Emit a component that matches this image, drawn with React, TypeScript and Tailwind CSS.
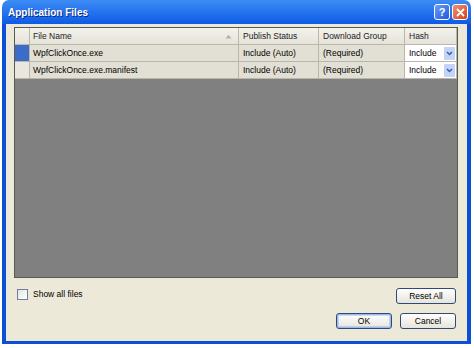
import React from 'react';

const rows = [
  { name: 'WpfClickOnce.exe', status: 'Include (Auto)', group: '(Required)', hash: 'Include', selected: true },
  { name: 'WpfClickOnce.exe.manifest', status: 'Include (Auto)', group: '(Required)', hash: 'Include', selected: false },
];

const cell = 'h-full flex items-center border-r border-b border-[#b9b7ab] px-[4px] whitespace-nowrap overflow-hidden';

const XpButton = ({ label, focused, className }: { label: string; focused?: boolean; className?: string }) => (
  <div
    className={`h-[16px] flex items-center justify-center rounded-[3px] border border-[#2e4a7a] bg-gradient-to-b from-[#ffffff] to-[#e6e4da] text-[8.5px] text-black ${
      focused ? 'shadow-[inset_0_0_0_1.5px_#9bb9ee]' : ''
    } ${className ?? ''}`}
  >
    {label}
  </div>
);

const App = () => {
  return (
    <div className="w-[474px] h-[348px] bg-white overflow-hidden font-['Liberation_Sans',Arial,sans-serif]">
      <div className="ml-[2px] w-[469px] h-[344px] flex flex-col rounded-t-[7px] bg-[#1a47c4] bg-gradient-to-b from-[#3d8cf5] via-[#0d5ae6] to-[#0a4fd6] from-0% via-[7%] to-[7%]">
        {/* title bar */}
        <div className="h-[24px] flex items-center pl-[6px] pr-[3px] shrink-0">
          <span className="text-white font-bold text-[10px] [text-shadow:1px_1px_0_#0a2a80]">Application Files</span>
          <div className="ml-auto flex items-center gap-[2px]">
            <div className="w-[16px] h-[16px] rounded-[3px] border border-white bg-gradient-to-br from-[#6b9cf7] to-[#2258d8] flex items-center justify-center text-white font-bold text-[11px] leading-none">
              ?
            </div>
            <div className="w-[16px] h-[16px] rounded-[3px] border border-white bg-gradient-to-br from-[#f09070] to-[#d24018] flex items-center justify-center">
              <svg width="9" height="9" viewBox="0 0 9 9">
                <path d="M1.5 1.5 L7.5 7.5 M7.5 1.5 L1.5 7.5" stroke="white" strokeWidth="1.8" strokeLinecap="round" />
              </svg>
            </div>
          </div>
        </div>

        {/* body */}
        <div className="flex-1 mx-[4px] mb-[3px] bg-[#ece9d8] flex flex-col px-[8px] pt-[3px] text-[8.5px] text-black">
          {/* grid */}
          <div className="w-[444px] h-[251px] border border-[#5a5a55] bg-[#808080] flex flex-col">
            <div className="h-[17px] flex bg-gradient-to-b from-[#f3f2ec] to-[#e4e2d8]">
              <div className={`${cell} w-[15px]`} />
              <div className={`${cell} w-[209px] pl-[3px] text-[#222]`}>
                <span>File Name</span>
                <svg className="ml-auto mr-[2px]" width="7" height="5" viewBox="0 0 7 5">
                  <path d="M0.5 4.5 L3.5 0.8 L6.5 4.5 Z" fill="#b4b2aa" />
                </svg>
              </div>
              <div className={`${cell} w-[80px] text-[#222]`}>Publish Status</div>
              <div className={`${cell} w-[86px] text-[#222]`}>Download Group</div>
              <div className={`${cell} w-[52px] text-[#222]`}>Hash</div>
            </div>
            {rows.map((r) => (
              <div key={r.name} className="h-[17px] flex bg-[#e2dfd4]">
                <div className={`${cell} w-[15px] ${r.selected ? 'bg-[#3a6cc8]' : 'bg-[#e9e7de]'}`} />
                <div className={`${cell} w-[209px] pl-[3px]`}>{r.name}</div>
                <div className={`${cell} w-[80px]`}>{r.status}</div>
                <div className={`${cell} w-[86px]`}>{r.group}</div>
                <div className={`${cell} w-[52px] bg-white pr-[1px]`}>
                  <span>{r.hash}</span>
                  <div className="ml-auto w-[11px] h-[13px] rounded-[1px] bg-[#c4d4f6] flex items-center justify-center">
                    <svg width="7" height="5" viewBox="0 0 7 5">
                      <path d="M1 1 L3.5 3.6 L6 1" stroke="#3a59b8" strokeWidth="1.4" fill="none" />
                    </svg>
                  </div>
                </div>
              </div>
            ))}
          </div>

          {/* show all / reset */}
          <div className="mt-[10px] flex items-start justify-between mr-[3px]">
            <div className="flex items-center gap-[5px] ml-[3px]">
              <div className="w-[11px] h-[11px] border border-[#6d7f9a] bg-gradient-to-br from-[#e4e4e0] to-white" />
              <span>Show all files</span>
            </div>
            <XpButton label="Reset All" className="w-[60px]" />
          </div>

          {/* ok / cancel */}
          <div className="mt-[9px] flex justify-end gap-[8px] mr-[3px]">
            <XpButton label="OK" focused className="w-[56px]" />
            <XpButton label="Cancel" className="w-[56px]" />
          </div>
        </div>
      </div>
    </div>
  );
};

export default App;
